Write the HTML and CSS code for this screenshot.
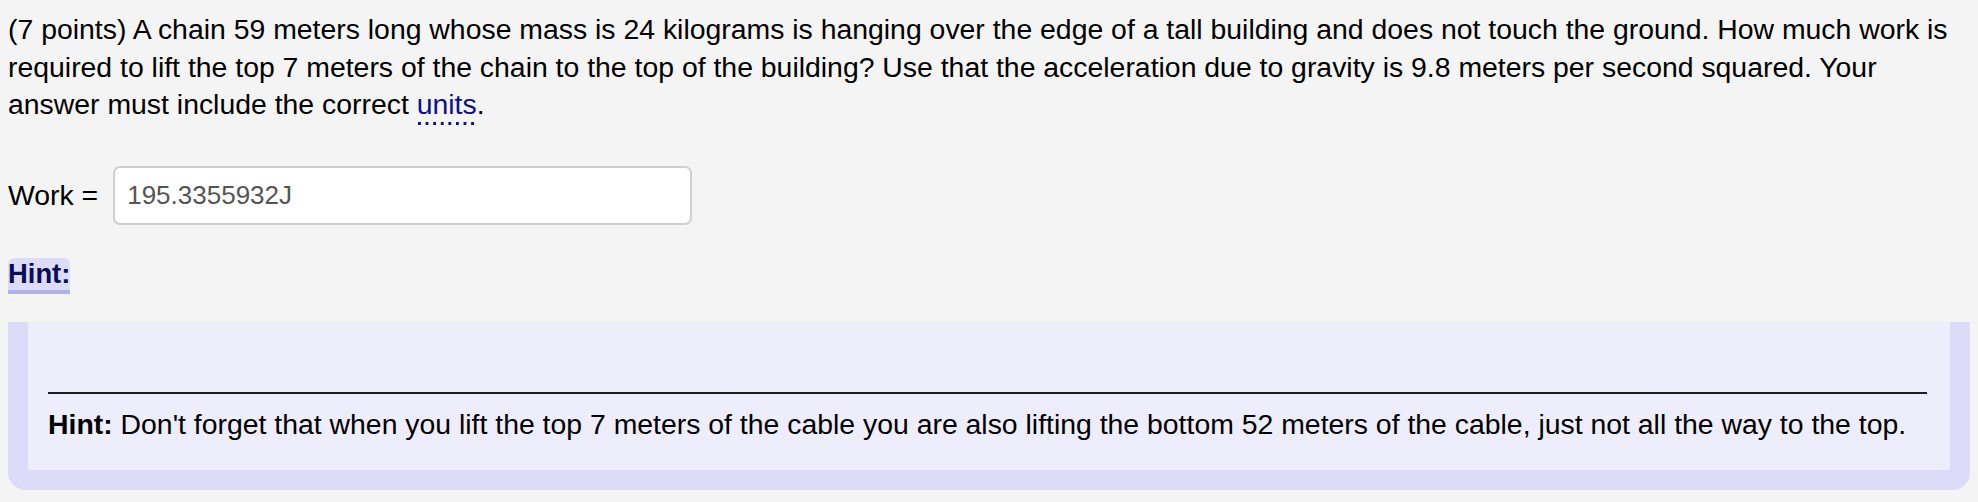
FILE: index.html
```html
<!DOCTYPE html>
<html>
<head>
<meta charset="utf-8">
<link rel="stylesheet" href="styles.css">
</head>
<body>
<div class="problem">
  <p class="question">(7 points) A chain 59 meters long whose mass is 24 kilograms is hanging over the edge of a tall building and does not touch the ground. How much work is required to lift the top 7 meters of the chain to the top of the building? Use that the acceleration due to gravity is 9.8 meters per second squared. Your answer must include the correct <span class="units">units</span>.</p>
  <div class="answer-row">
    <span class="answer-label">Work =</span>
    <input class="answer-input" type="text" value="195.3355932J">
  </div>
  <div class="hint-row"><span class="hint-label">Hint:</span></div>
  <div class="hint-panel">
    <div class="hint-rule"></div>
    <p class="hint-text"><b>Hint:</b> Don't forget that when you lift the top 7 meters of the cable you are also lifting the bottom 52 meters of the cable, just not all the way to the top.</p>
  </div>
</div>
</body>
</html>
```

FILE: styles.css
```css
html, body {
  margin: 0;
  padding: 0;
  background: #f4f4f4;
}

body {
  font-family: "Liberation Sans", Arial, Helvetica, sans-serif;
  font-size: 28.4px;
  color: #000;
  width: 1978px;
  height: 502px;
  overflow: hidden;
}

.problem {
  padding: 11px 8px 0 8px;
}

.question {
  margin: 0;
  line-height: 37.5px;
}

.units {
  color: #10108c;
  padding-bottom: 5px;
  background-image: linear-gradient(to right, #10108c 0, #10108c 3.3px, transparent 3.3px);
  background-size: 7.6px 3px;
  background-repeat: repeat-x;
  background-position: 1px 100%;
}

.answer-row {
  display: flex;
  align-items: center;
  margin-top: 42px;
  height: 59px;
}

.answer-label {
  line-height: 37px;
  margin-right: 15px;
}

.answer-input {
  box-sizing: border-box;
  width: 579px;
  height: 59px;
  border: 2px solid #cfcfcf;
  border-radius: 7px;
  background: #fff;
  padding: 0 12px;
  font-family: "Liberation Sans", Arial, Helvetica, sans-serif;
  font-size: 26px;
  color: #555;
  outline: none;
}

.hint-row {
  margin-top: 33px;
  height: 36px;
}

.hint-label {
  display: inline-block;
  font-size: 27.4px;
  font-weight: bold;
  color: #0b0b57;
  background: #dcdcf8;
  border-bottom: 4px solid #b2b2e6;
  border-radius: 6px 6px 0 0;
  line-height: 32px;
  vertical-align: top;
}

.hint-panel {
  margin-top: 28px;
  background: #eeedfc;
  border: 20px solid #dcdcf9;
  border-top: 0;
  border-radius: 0 0 18px 18px;
  padding: 70px 23px 27px 20px;
}

.hint-rule {
  border-top: 2px solid #1e1e1e;
  margin-bottom: 12px;
}

.hint-text {
  margin: 0;
  line-height: 37px;
}
```
